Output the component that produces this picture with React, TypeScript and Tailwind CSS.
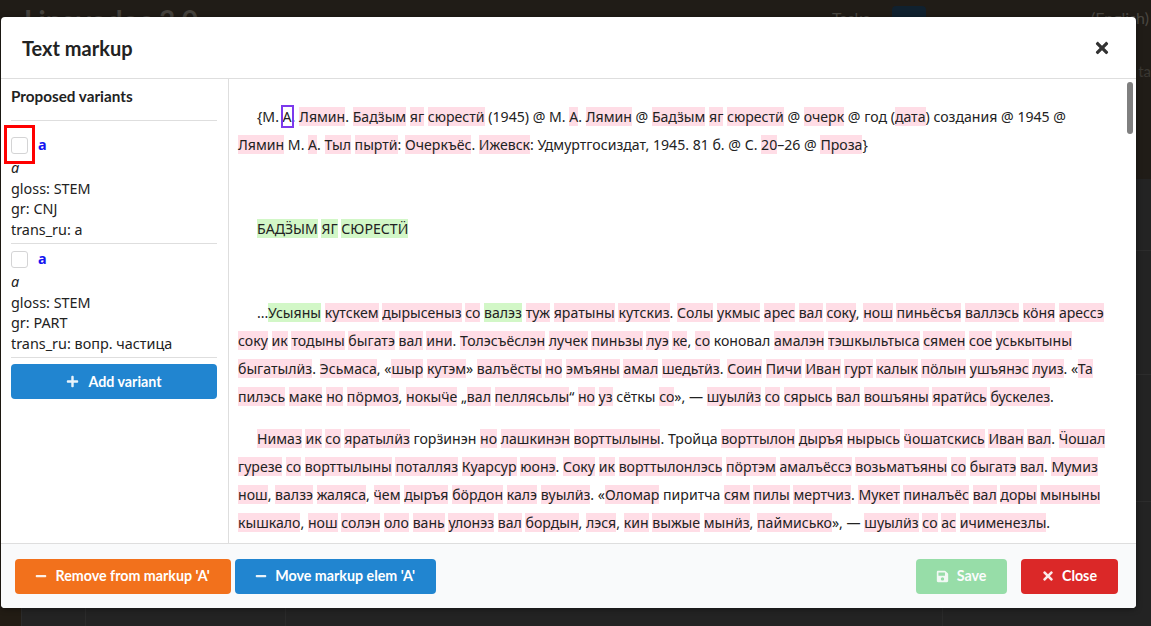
import { FaMinus, FaPlus, FaSave, FaTimes } from "react-icons/fa"

type Seg = { t: string; k: "n" | "p" | "g" | "s" }

// [word] = pink markup, ~word~ = green markup, #word# = selected element
function parse(line: string): Seg[] {
  return line
    .split(/(\[[^\]]+\]|~[^~]+~|#[^#]+#)/)
    .filter(Boolean)
    .map((s) => {
      if (s.startsWith("[")) return { t: s.slice(1, -1), k: "p" }
      if (s.startsWith("~") && s.endsWith("~") && s.length > 2) return { t: s.slice(1, -1), k: "g" }
      if (s.startsWith("#") && s.endsWith("#") && s.length > 2) return { t: s.slice(1, -1), k: "s" }
      return { t: s, k: "n" }
    })
}

const PARAS: { mt: string; lines: string[] }[] = [
  {
    mt: "mt-0",
    lines: [
      "{М. #А#. [Лямин]. [Бадӟым] [яг] [сюрестӥ] (1945) @ М. [А]. [Лямин] @ [Бадӟым] [яг] [сюрестӥ] @ [очерк] @ год ([дата]) создания @ 1945 @",
      "[Лямин] М. [А]. [Тыл] [пыртӥ]: [Очеркъёс]. [Ижевск]: Удмуртгосиздат, 1945. 81 б. @ С. [20]–26 @ [Проза]}",
    ],
  },
  {
    mt: "mt-[56px]",
    lines: ["~БАДӞЫМ~ ~ЯГ~ ~СЮРЕСТӤ~"],
  },
  {
    mt: "mt-[56px]",
    lines: [
      "...~Усыяны~ [кутскем] [дырысеныз] [со] ~валэз~ [туж] [яратыны] [кутскиз]. [Солы] [укмыс] [арес] [вал] [соку], [нош] [пиньёсъя] [валлэсь] [кӧня] [арессэ]",
      "[соку] [ик] [тодыны] [быгатэ] [вал] [ини]. [Толэсъёслэн] [лучек] [пиньзы] [луэ] [ке], [со] коновал [амалэн] [тэшкыльтыса] [сямен] [сое] [уськытыны]",
      "[быгатылӥз]. [Эсьмаса], «[шыр] [кутэм]» [валъёсты] [но] [эмъяны] [амал] [шедьтӥз]. [Соин] [Пичи] [Иван] [гурт] [калык] [пӧлын] [ушъянэс] [луиз]. «[Та]",
      "[пилэсь] [маке] [но] [пӧрмоз], [нокыӵе] „[вал] [пеллясьлы]“ [но] [уз] сёткы [со]», — [шуылӥз] [со] [сярысь] [вал] [вошъяны] [яратӥсь] [бускелез].",
    ],
  },
  {
    mt: "mt-[14px]",
    lines: [
      "[Нимаз] [ик] [со] [яратылӥз] горӟинэн [но] [лашкинэн] [ворттылыны]. Тройца [ворттылон] [дыръя] [нырысь] [ӵошатскись] [Иван] [вал]. [Ӵошал]",
      "[гурезе] [со] [ворттылыны] [поталляз] [Куарсур] [юонэ]. [Соку] [ик] [ворттылонлэсь] [пӧртэм] [амалъёссэ] [возьматъяны] [со] [быгатэ] [вал]. [Мумиз]",
      "[нош], [валзэ] [жаляса], [ӵем] [дыръя] [бӧрдон] [калэ] [вуылӥз]. «[Оломар] пиритча [сям] [пилы] [мертчиз]. [Мукет] [пиналъёс] [вал] [доры] [мыныны]",
      "[кышкало], [нош] [солэн] [оло] [вань] [улонэз] [вал] [бордын], [лэся], [кин] [выжые] [мынӥз], [паймисько]», — [шуылӥз] [со] [ас] [ичименезлы].",
    ],
  },
]

const VARIANTS = [
  { gr: "CNJ", trans: "а", marked: true, pt: "pt-[13px]" },
  { gr: "PART", trans: "вопр. частица", marked: false, pt: "pt-[4px]" },
]

function Line({ text, indent }: { text: string; indent: boolean }) {
  return (
    <div className={`h-[28px] leading-[28px] whitespace-nowrap ${indent ? "pl-[19px]" : ""}`}>
      {parse(text).map((s, i) => {
        if (s.k === "p") return <span key={i} className="bg-[#ffdde6]">{s.t}</span>
        if (s.k === "g") return <span key={i} className="bg-[#d2f7c7]">{s.t}</span>
        if (s.k === "s")
          return (
            <span key={i} className="outline-2 outline-[#7c3aed]">
              {s.t}
            </span>
          )
        return <span key={i}>{s.t}</span>
      })}
    </div>
  )
}

function Btn({ color, icon, label, extra = "" }: { color: string; icon: React.ReactNode; label: string; extra?: string }) {
  return (
    <button
      className={`h-[35px] px-[21px] rounded-[4px] flex items-center text-white font-bold text-[14.25px] ${color} ${extra}`}
    >
      <span className="w-[16.5px] -ml-[3px] mr-[6px] opacity-90 flex items-center justify-center">{icon}</span>
      {label}
    </button>
  )
}

export default function App() {
  return (
    <div className="relative h-[626px] w-full overflow-hidden bg-[#232323] font-['Lato',sans-serif]">
      {/* page behind the dimmer */}
      <div className="h-[179px] bg-[#201c17] relative">
        <div className="flex items-start h-[40px] pt-[6px]">
          <div className="pl-[24px] w-[600px] text-[28px] font-bold text-[#45423d] leading-none">Lingvodoc 3.0</div>
          <div className="pl-[232px] text-[16px] text-[#4a4741] flex items-start gap-[22px]">
            <span>Tasks</span>
            <span className="w-[34px] h-[20px] rounded-[4px] bg-[#10212f]" />
          </div>
          <div className="ml-auto pr-[2px] text-[16px] text-[#4a4741]">(English)</div>
        </div>
        <div className="absolute right-0 top-[60px] text-[15px] text-[#3a3732]">ta</div>
      </div>
      <div className="flex h-[447px]">
        <div className="w-[22px] bg-[#221c14] border-r border-[#2b2b2b]" />
        <div className="w-[64px] border-r border-[#2b2b2b]" />
        <div className="w-[200px] border-r border-[#2a2a2a]" />
        <div className="w-[657px] border-r border-[#2a2a2a]" />
        <div className="flex-1 flex flex-col">
          <div className="h-[72px] border-b border-[#2c2c2c]" />
          <div className="h-[124px] border-b border-[#2c2c2c]" />
          <div className="h-[127px] border-b border-[#2c2c2c]" />
        </div>
      </div>

      {/* modal */}
      <div className="absolute inset-0 pl-[1px] pt-[17px]">
        <div className="w-[1135px] h-[591px] bg-white rounded-[4px] flex flex-col overflow-hidden shadow-[0_1px_6px_rgba(0,0,0,0.4)]">
          {/* HEADER */}
          <div className="h-[62px] shrink-0 border-b border-[#dedede] flex items-center pl-[21px] pr-[25px]">
            <div className="text-[20px] font-bold text-[#222]">Text markup</div>
            <FaTimes className="ml-auto text-[#333]" size={18} />
          </div>

          {/* BODY */}
          <div className="flex-1 flex min-h-0">
            {/* proposed variants */}
            <div className="w-[228px] shrink-0 border-r border-[#dedede] pl-[10px] pr-[11px] font-['Noto_Sans',sans-serif] text-[14.4px] text-[#222]">
              <div className="pt-[7px] pb-[14px] leading-[20px] border-b border-[#dedede] font-['Lato',sans-serif] font-bold text-[15.25px] text-[#222]">
                Proposed variants
              </div>
              {VARIANTS.map((v, i) => (
                <div key={i} className={`${v.pt} pb-[3px] border-b border-[#dedede]`}>
                  <div className="h-[22px] flex items-center">
                    <div className="relative w-[17px] h-[17px] rounded-[3px] border border-[#d4d4d5] bg-white">
                      {v.marked && (
                        <div className="absolute left-[-8px] top-[-13px] w-[31px] h-[39px] border-[3px] border-[#ff0000]" />
                      )}
                    </div>
                    <span className="ml-[10px] font-bold text-[#1414f0]">a</span>
                  </div>
                  <div className="mt-[2px] leading-[20.5px]">
                    <div className="italic">a</div>
                    <div>gloss: STEM</div>
                    <div>gr: {v.gr}</div>
                    <div>trans_ru: {v.trans}</div>
                  </div>
                </div>
              ))}
              <button className="mt-[6px] w-full h-[35px] rounded-[4px] bg-[#2185d0] text-white flex items-center justify-center font-['Lato',sans-serif] font-bold text-[14.25px]">
                <FaPlus className="mr-[9px] opacity-90" size={13} />
                Add variant
              </button>
            </div>

            {/* text */}
            <div className="flex-1 flex min-w-0">
              <div className="flex-1 overflow-hidden pl-[9px] pt-[24px] font-['Noto_Sans',sans-serif] text-[14.1px] text-[#222]">
                {PARAS.map((p, i) => (
                  <div key={i} className={p.mt}>
                    {p.lines.map((l, j) => (
                      <Line key={j} text={l} indent={j === 0} />
                    ))}
                  </div>
                ))}
              </div>
              <div className="w-[12px] shrink-0 pt-[3px] pl-[3px]">
                <div className="w-[6px] h-[52px] rounded-[3px] bg-[#7f7f7f]" />
              </div>
            </div>
          </div>

          {/* FOOTER */}
          <div className="h-[65px] shrink-0 border-t border-[#dedede] bg-[#f9fafb] flex items-center pl-[14px] pr-[18px]">
            <Btn color="bg-[#f2711c]" icon={<FaMinus size={12} />} label="Remove from markup 'A'" />
            <Btn color="bg-[#2185d0]" icon={<FaMinus size={12} />} label="Move markup elem 'A'" extra="ml-[4px]" />
            <Btn color="bg-[#21ba45] opacity-45" icon={<FaSave size={13} />} label="Save" extra="ml-auto" />
            <Btn color="bg-[#db2828]" icon={<FaTimes size={14} />} label="Close" extra="ml-[14px]" />
          </div>
        </div>
      </div>
    </div>
  )
}
